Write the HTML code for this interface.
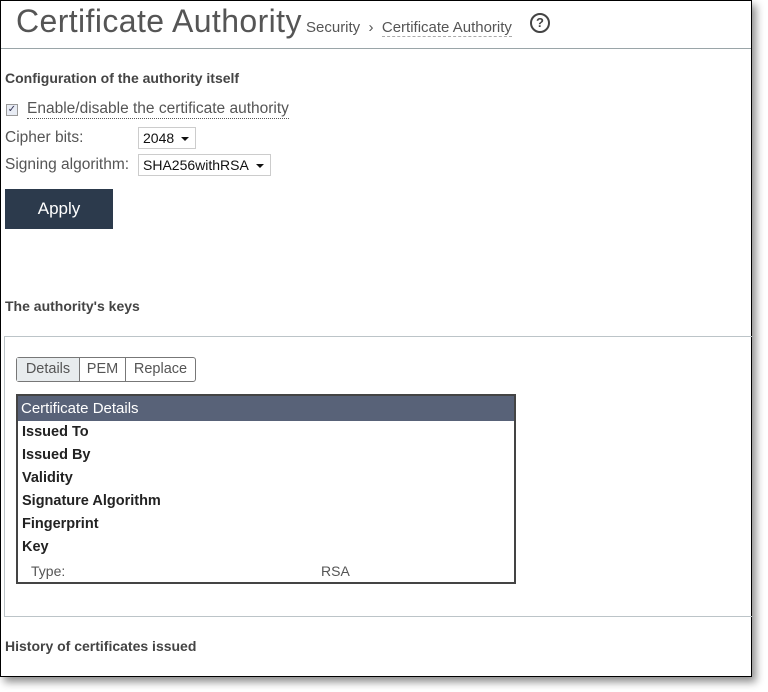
<!DOCTYPE html>
<html><head><style>
*{margin:0;padding:0;box-sizing:border-box}
body{width:768px;height:692px;background:#fff;font-family:"Liberation Sans",sans-serif;position:relative;overflow:hidden;color:#444}
.frame{position:absolute;left:0;top:0;width:752px;height:677px;border:1px solid #000;box-shadow:4px 5px 8px rgba(0,0,0,.45);background:#fff}
.a{position:absolute;white-space:nowrap}
h2{font-size:14px;font-weight:bold;color:#444}
.sel{position:absolute;border:1px solid #ccc;background:#fff;font-size:14px;color:#111;padding:2px 4px;height:22px}
.sel:after{content:"";position:absolute;right:6px;top:9px;border:4px solid transparent;border-top:4px solid #111;border-bottom:0}
.row{position:absolute;left:22px;font-size:14.5px;font-weight:bold;color:#222}
</style></head><body>
<div class="frame"></div>
<div class="a" style="left:16px;top:3px;font-size:32px;letter-spacing:0.4px;color:#555">Certificate Authority</div>
<div class="a" style="left:306px;top:19px;font-size:15px;color:#555">Security &nbsp;›&nbsp; <span style="border-bottom:1px dashed #aaa">Certificate Authority</span></div>
<div class="a" style="left:530px;top:13px;width:20px;height:20px;border:2px solid #444;border-radius:50%;font-size:13px;font-weight:bold;text-align:center;line-height:16px;color:#444">?</div>
<div class="a" style="left:1px;top:48px;width:750px;height:1px;background:#9aa5a8"></div>
<h2 class="a" style="left:5px;top:70px">Configuration of the authority itself</h2>
<div class="a" style="left:6px;top:104px;width:12px;height:12px;border:1px solid #999;background:#e8ecf4;font-size:10px;line-height:10px;text-align:center;color:#335">✓</div>
<div class="a" style="left:27px;top:100px;font-size:15.5px;color:#555;border-bottom:1px dotted #555">Enable/disable the certificate authority</div>
<div class="a" style="left:5px;top:129px;font-size:15.5px;color:#555">Cipher bits:</div>
<div class="sel" style="left:138px;top:127px;width:58px">2048</div>
<div class="a" style="left:5px;top:156px;font-size:15.5px;color:#555">Signing algorithm:</div>
<div class="sel" style="left:138px;top:154px;width:133px">SHA256withRSA</div>
<div class="a" style="left:5px;top:189px;width:108px;height:40px;background:#2c3a4c;color:#fff;font-size:17px;text-align:center;line-height:40px">Apply</div>
<h2 class="a" style="left:5px;top:298px">The authority's keys</h2>
<div class="a" style="left:4px;top:336px;width:748px;height:281px;border:1px solid #bcc4c8;border-right:0"></div>
<div class="a" style="left:16px;top:357px;width:180px;height:25px;border:1px solid #777;border-radius:3px;font-size:14.5px;color:#555;display:flex">
<div style="width:63px;background:#e8ecee;border-right:1px solid #777;text-align:center;line-height:23px">Details</div>
<div style="width:46px;border-right:1px solid #777;text-align:center;line-height:23px">PEM</div>
<div style="flex:1;text-align:center;line-height:23px">Replace</div></div>
<div class="a" style="left:16px;top:394px;width:500px;height:190px;border:2px solid #444"></div>
<div class="a" style="left:18px;top:396px;width:496px;height:25px;background:#586278;color:#fff;font-size:15px;line-height:25px;padding-left:3px">Certificate Details</div>
<div class="row" style="top:424px">Issued To</div>
<div class="row" style="top:447px">Issued By</div>
<div class="row" style="top:470px">Validity</div>
<div class="row" style="top:493px">Signature Algorithm</div>
<div class="row" style="top:516px">Fingerprint</div>
<div class="row" style="top:539px">Key</div>
<div class="a" style="left:31px;top:563px;font-size:14px;color:#555">Type:</div>
<div class="a" style="left:321px;top:563px;font-size:14px;color:#555">RSA</div>
<h2 class="a" style="left:5px;top:638px">History of certificates issued</h2>
</body></html>
